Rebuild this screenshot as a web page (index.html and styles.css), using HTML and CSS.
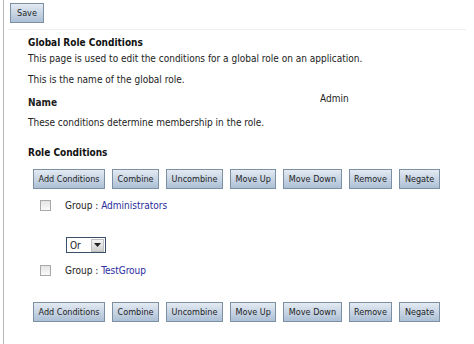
FILE: index.html
```html
<!DOCTYPE html>
<html lang="en">
<head>
    <meta charset="UTF-8">
    <title>Global Role Conditions</title>
    <link rel="stylesheet" href="styles.css">
</head>
<body>
    <div class="page">
        <div class="toolbar">
            <button class="btn">Save</button>
        </div>

        <div class="content">
            <h2>Global Role Conditions</h2>
            <p class="intro">This page is used to edit the conditions for a global role on an application.</p>
            <p class="hint">This is the name of the global role.</p>

            <div class="name-row">
                <span class="label">Name</span>
                <span class="value">Admin</span>
            </div>
            <p class="hint-members">These conditions determine membership in the role.</p>

            <h3>Role Conditions</h3>
            <div class="actions">
                <button class="btn">Add Conditions</button>
                <button class="btn">Combine</button>
                <button class="btn">Uncombine</button>
                <button class="btn">Move Up</button>
                <button class="btn">Move Down</button>
                <button class="btn">Remove</button>
                <button class="btn">Negate</button>
            </div>

            <ul class="conditions">
                <li class="cond">
                    <span class="check"></span>
                    <span>Group : <a href="#">Administrators</a></span>
                </li>
                <li class="operator">
                    <span class="select">
                        <span class="select-text">Or</span>
                        <span class="select-arrow">
                            <svg width="7" height="4" viewBox="0 0 7 4"><path d="M0 0h7L3.5 4z" fill="#222"/></svg>
                        </span>
                    </span>
                </li>
                <li class="cond cond-last">
                    <span class="check"></span>
                    <span>Group : <a href="#">TestGroup</a></span>
                </li>
            </ul>

            <div class="actions actions-bottom">
                <button class="btn">Add Conditions</button>
                <button class="btn">Combine</button>
                <button class="btn">Uncombine</button>
                <button class="btn">Move Up</button>
                <button class="btn">Move Down</button>
                <button class="btn">Remove</button>
                <button class="btn">Negate</button>
            </div>
        </div>
    </div>
</body>
</html>
```

FILE: styles.css
```css
body {
    margin: 0;
    font-family: "DejaVu Sans Condensed", "DejaVu Sans", Tahoma, sans-serif;
    font-size: 10px;
    line-height: 13px;
    color: #222;
    background-color: #fff;
}
.page {
    margin-left: 3px;
    border-left: 1px solid #b5b5b5;
    min-height: 100vh;
}
.toolbar {
    padding: 3px 0 0 6px;
    height: 23px;
}
.btn {
    font-family: "DejaVu Sans Condensed", "DejaVu Sans", Tahoma, sans-serif;
    font-size: 9px;
    white-space: nowrap;
    color: #1e1e1e;
    height: 20px;
    padding: 0 4.5px;
    border: 1px solid #7d8fa3;
    background: linear-gradient(#e3eaf2, #adc0d6);
    cursor: pointer;
}
.toolbar .btn {
    padding: 0 6px;
}
.content {
    margin: 3px 8px 0 4px;
    border-top: 1px solid #eeeeee;
    padding-left: 20px;
}
h2, h3 {
    font-size: 10px;
    font-weight: bold;
    margin: 0;
    color: #111;
}
h2 {
    padding-top: 6px;
}
p {
    margin: 0;
}
.intro {
    margin-top: 3px;
}
.hint {
    margin-top: 8px;
}
.name-row {
    display: flex;
    margin-top: 6px;
}
.name-row .label {
    width: 292px;
    font-weight: bold;
    padding-top: 4px;
}
.hint-members {
    margin-top: 7px;
}
h3 {
    margin-top: 17px;
}
.actions {
    display: flex;
    gap: 7px;
    padding-left: 5px;
    margin-top: 10px;
}
.conditions {
    list-style: none;
    margin: 0;
    padding: 0 0 0 12px;
}
.cond {
    display: flex;
    align-items: center;
    gap: 14px;
    margin-top: 10px;
}
.cond-last {
    margin-top: 11px;
}
.check {
    width: 9px;
    height: 9px;
    border: 1px solid #a9a9a9;
    background: linear-gradient(#e4e4e4, #fafafa);
}
a {
    color: #2b2b9c;
    text-decoration: none;
}
.operator {
    display: flex;
    padding: 25px 0 0 26px;
}
.select {
    display: inline-flex;
    align-items: center;
    width: 34px;
    height: 14px;
    border: 1px solid #3a4f6a;
    background-color: #fff;
    padding: 0 1px 0 3px;
}
.select-text {
    flex: 1;
    font-size: 10px;
}
.select-arrow {
    width: 11px;
    height: 11px;
    display: flex;
    align-items: center;
    justify-content: center;
    background: linear-gradient(#f4f4f4, #cfcfcf);
    border: 1px solid #c0c0c0;
}
.actions-bottom {
    margin-top: 25px;
}
```
